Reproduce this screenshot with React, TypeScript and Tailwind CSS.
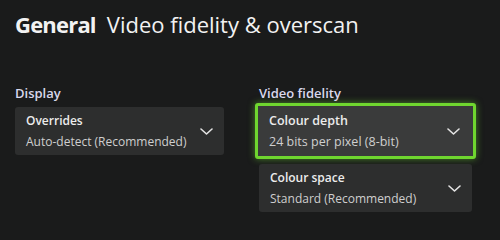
const font = { fontFamily: '"Open Sans", "Noto Sans", sans-serif' };

function Chevron() {
  return (
    <svg width="13" height="7" viewBox="0 0 13 7" fill="none" className="shrink-0">
      <polyline
        points="1,1 6.5,6 12,1"
        stroke="#e4e4e4"
        strokeWidth="1.6"
        strokeLinecap="round"
        strokeLinejoin="round"
      />
    </svg>
  );
}

function Dropdown({
  title,
  value,
  focused = false,
  className = "",
}: {
  title: string;
  value: string;
  focused?: boolean;
  className?: string;
}) {
  return (
    <div
      className={
        "flex items-center justify-between rounded-[3px] " +
        (focused
          ? "h-[56px] border-[3px] border-[#6fd62f] bg-[#3a3b3b] pl-[11px] pr-[13px] text-[12.5px] shadow-[0_0_7px_rgba(110,215,50,0.55)] "
          : "h-[48px] bg-[#2d2e2e] pl-[11px] pr-[11px] text-[12px] ") +
        className
      }
    >
      <div className="flex flex-col gap-[5px]">
        <span className="font-semibold leading-[16px] text-[#ececec]">{title}</span>
        <span className="leading-[16px] text-[#cfcfcf]">{value}</span>
      </div>
      <Chevron />
    </div>
  );
}

export default function App() {
  return (
    <div className="h-[240px] w-[500px] overflow-hidden bg-[#1a1b1b] px-[15px] pt-[9px]" style={font}>
      <h1 className="flex items-baseline gap-[11px] text-[22px] leading-[30px] text-[#f2f2f2]">
        <span className="font-bold tracking-[-0.8px]">General</span>
        <span>Video fidelity &amp; overscan</span>
      </h1>

      <div className="mt-[46px] flex">
        <section className="w-[209px]">
          <h2 className="text-[13px] font-semibold leading-[16px] text-[#d9d8ec]">Display</h2>
          <Dropdown className="mt-[6px]" title="Overrides" value="Auto-detect (Recommended)" />
        </section>

        <section className="ml-[35px] w-[213px]">
          <h2 className="text-[13px] font-semibold leading-[16px] text-[#d9d8ec]">Video fidelity</h2>
          <Dropdown
            focused
            className="-mx-[4px] mt-[2px]"
            title="Colour depth"
            value="24 bits per pixel (8-bit)"
          />
          <Dropdown className="mt-[5px]" title="Colour space" value="Standard (Recommended)" />
        </section>
      </div>
    </div>
  );
}
